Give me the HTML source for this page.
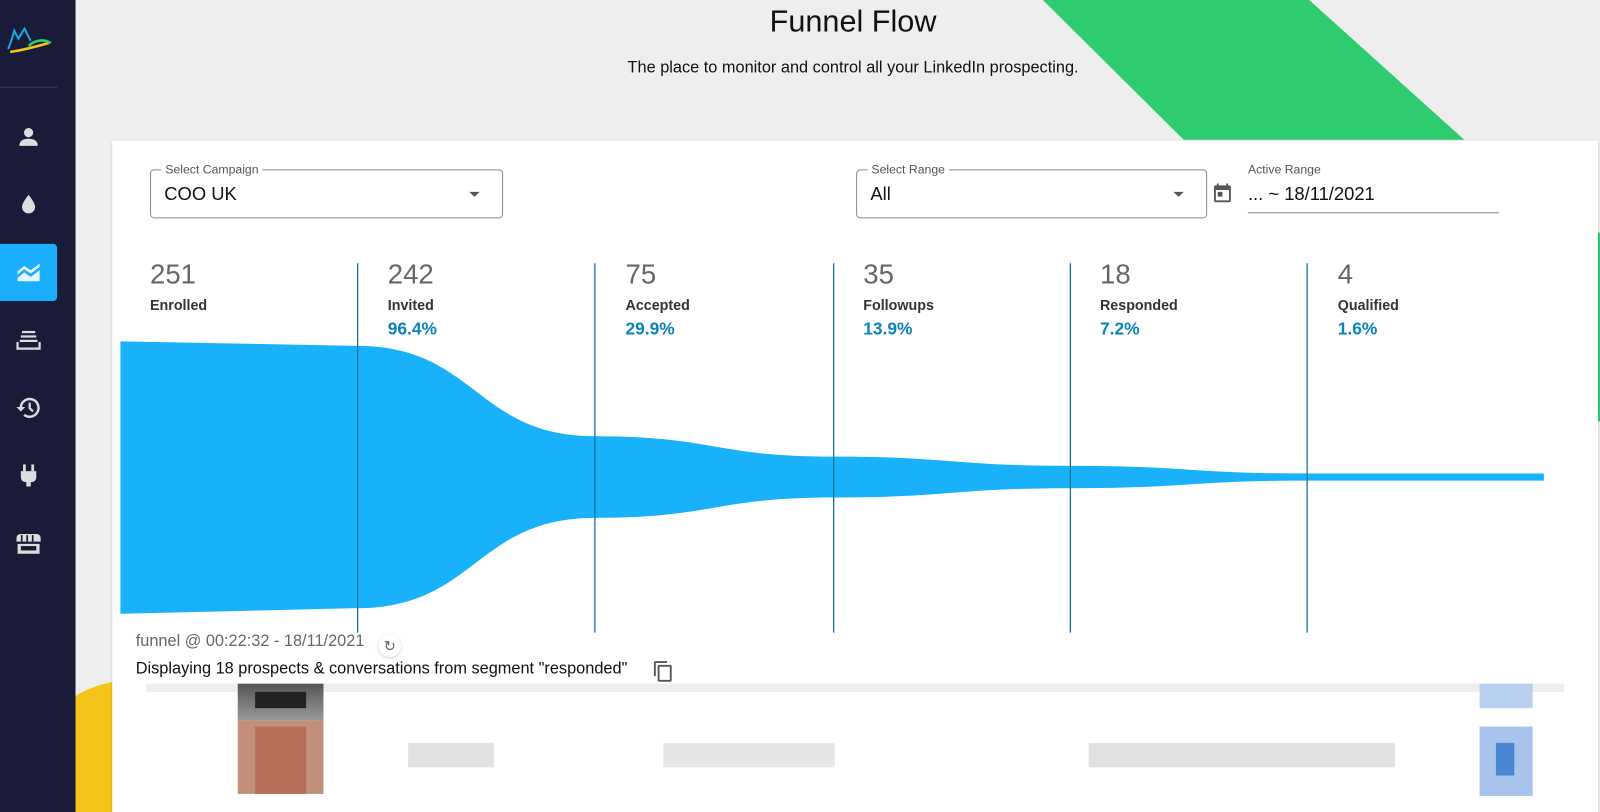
<!DOCTYPE html>
<html><head><meta charset="utf-8"><style>
*{margin:0;padding:0;box-sizing:border-box}
html,body{width:1600px;height:812px;overflow:hidden;background:#eeeeee}
body{font-family:"Liberation Sans",Arial,sans-serif;position:relative}
#w{position:absolute;left:0;top:0;width:1568px;height:796px;transform:scale(1.0204);transform-origin:0 0}
.side{position:absolute;left:0;top:0;width:74px;height:800px;background:#1a1b38}
.side .ic{position:absolute;left:0;width:56px;height:56px;display:flex;align-items:center;justify-content:center}
.card{position:absolute;left:110px;top:138px;width:1456px;height:680px;background:#fff;box-shadow:0 1px 3px rgba(0,0,0,.15)}
.abs{position:absolute}
.fld{position:absolute;border:1px solid #8a8a8a;border-radius:4px;height:48px}
.fld .lb{position:absolute;top:-8px;left:10px;background:#fff;padding:0 4px;font-size:12px;color:#555}
.fld .v{position:absolute;left:13px;top:13px;font-size:18px;color:#111}
.fld .ar{position:absolute;right:22px;top:21px;border-left:5px solid transparent;border-right:5px solid transparent;border-top:5px solid #555}
.num{font-size:27px;color:#666}
.nm{font-size:14px;font-weight:bold;color:#333;margin-top:6px}
.pc{font-size:17px;font-weight:bold;color:#0a83b8;margin-top:6px}
</style></head><body><div id="w">
<svg class="abs" style="left:0;top:0" width="1600" height="812">
<polygon points="1022,0 1283,0 1435,137 1160,137" fill="#2ecc6f"/>
<path d="M74,682 Q90,672 112,668 L112,812 L74,812Z" fill="#f4c518"/>
<rect x="1565" y="228" width="3" height="185" fill="#2ecc6f"/>
</svg>
<div class="side">
<svg class="abs" style="left:4px;top:24px" width="48" height="30" viewBox="0 0 48 30">
<path d="M4,24 Q8,14 10,6 L14,14 L20,4 L26,16" fill="none" stroke="#1aa7e6" stroke-width="2"/>
<path d="M6,27 Q24,24 44,18" fill="none" stroke="#f4c518" stroke-width="2.5"/>
<path d="M24,21 Q34,12 46,18" fill="none" stroke="#2ecc6f" stroke-width="2.5"/>
</svg>
<div class="abs" style="left:0;top:85px;width:56px;height:1px;background:#3a3b58"></div>
<div class="ic" style="top:106px"><svg width="24" height="24" viewBox="0 0 24 24"><circle cx="12" cy="8" r="4.5" fill="#ddd"/><path d="M3,21 Q3,14 12,14 Q21,14 21,21Z" fill="#ddd"/></svg></div>
<div class="ic" style="top:172px"><svg width="22" height="24" viewBox="0 0 24 24"><path d="M12,2 Q19,11 19,15 A7,7 0 0 1 5,15 Q5,11 12,2Z" fill="#ddd"/></svg></div>
<div class="ic" style="top:239px;background:#1aaefc;border-radius:0 4px 4px 0"><svg width="26" height="22" viewBox="0 0 24 20"><path d="M2,9 L8,4 L14,8 L22,2 L22,5 L14,11 L8,7 L2,12Z" fill="#e8f6ff"/><path d="M2,15 L8,10 L14,14 L22,8 L22,18 L2,18Z" fill="#e8f6ff"/></svg></div>
<div class="ic" style="top:305px"><svg width="26" height="24" viewBox="0 0 24 22"><rect x="6" y="3" width="12" height="2" fill="#ddd"/><rect x="5" y="7" width="14" height="2" fill="#ddd"/><rect x="4" y="11" width="16" height="2" fill="#ddd"/><path d="M2,13 V19 H22 V13" fill="none" stroke="#ddd" stroke-width="2"/></svg></div>
<div class="ic" style="top:372px"><svg width="26" height="26" viewBox="0 0 24 24"><path d="M5,12 A8,8 0 1 1 8,18" fill="none" stroke="#ddd" stroke-width="2.2"/><path d="M1,11 L5,15 L9,11Z" fill="#ddd"/><path d="M13,7 V12 L16,15" fill="none" stroke="#ddd" stroke-width="2"/></svg></div>
<div class="ic" style="top:438px"><svg width="22" height="26" viewBox="0 0 20 24"><rect x="5" y="2" width="2.5" height="6" fill="#ddd"/><rect x="12.5" y="2" width="2.5" height="6" fill="#ddd"/><path d="M3,8 H17 V13 Q17,18 12,18 V22 H8 V18 Q3,18 3,13Z" fill="#ddd"/></svg></div>
<div class="ic" style="top:505px"><svg width="28" height="24" viewBox="0 0 26 22"><path d="M2,6 Q2,2 6,2 H20 Q24,2 24,6 V9 H2Z" fill="#ddd"/><rect x="3" y="11" width="20" height="9" fill="#ddd"/><rect x="6" y="3" width="1.5" height="6" fill="#1a1b38"/><rect x="11" y="3" width="1.5" height="6" fill="#1a1b38"/><rect x="16" y="3" width="1.5" height="6" fill="#1a1b38"/><rect x="6" y="13" width="14" height="4" fill="#1a1b38"/></svg></div>
</div>
<div class="abs" style="left:0;top:5px;width:1672px;text-align:center;font-size:30px;color:#111">Funnel Flow</div>
<div class="abs" style="left:0;top:58px;width:1672px;text-align:center;font-size:16px;color:#111">The place to monitor and control all your LinkedIn prospecting.</div>
<div class="card"></div>
<div class="fld" style="left:147px;top:166px;width:346px"><span class="lb">Select Campaign</span><span class="v">COO UK</span><span class="ar"></span></div>
<div class="fld" style="left:839px;top:166px;width:344px"><span class="lb">Select Range</span><span class="v">All</span><span class="ar"></span></div>
<svg class="abs" style="left:1187px;top:178px" width="22" height="22" viewBox="0 0 24 24"><path d="M19,4H18V2H16V4H8V2H6V4H5A2,2 0 0 0 3,6V20A2,2 0 0 0 5,22H19A2,2 0 0 0 21,20V6A2,2 0 0 0 19,4M19,20H5V9H19V20M7,11H12V16H7Z" fill="#555"/></svg>
<div class="abs" style="left:1223px;top:159px;font-size:12px;color:#555">Active Range</div>
<div class="abs" style="left:1223px;top:180px;font-size:18px;color:#111">... ~ 18/11/2021</div>
<div class="abs" style="left:1223px;top:208px;width:246px;height:1px;background:#888"></div>
<svg class="abs" style="left:0;top:0" width="1600" height="812">
<path d="M118,334.5 L350,339 C466,339 466,427.5 583,427.5 C700,427.5 700,447.5 817,447.5 C933,447.5 933,456.5 1049,456.5 C1165,456.5 1165,464 1281,464 L1513,464 L1513,471 L1281,471 C1165,471 1165,478.5 1049,478.5 C933,478.5 933,487.5 817,487.5 C700,487.5 700,507.5 583,507.5 C466,507.5 466,596 350,596 L118,601.5Z" fill="#1ab1fb"/>
<g stroke="#0a6e96" stroke-width="1.2"><line x1="350.5" y1="258" x2="350.5" y2="620"/><line x1="583" y1="258" x2="583" y2="620"/><line x1="817" y1="258" x2="817" y2="620"/><line x1="1049" y1="258" x2="1049" y2="620"/><line x1="1281" y1="258" x2="1281" y2="620"/></g>
</svg>
<div class="abs" style="left:147px;top:254px"><div class="num">251</div><div class="nm">Enrolled</div></div>
<div class="abs" style="left:380px;top:254px"><div class="num">242</div><div class="nm">Invited</div><div class="pc">96.4%</div></div>
<div class="abs" style="left:613px;top:254px"><div class="num">75</div><div class="nm">Accepted</div><div class="pc">29.9%</div></div>
<div class="abs" style="left:846px;top:254px"><div class="num">35</div><div class="nm">Followups</div><div class="pc">13.9%</div></div>
<div class="abs" style="left:1078px;top:254px"><div class="num">18</div><div class="nm">Responded</div><div class="pc">7.2%</div></div>
<div class="abs" style="left:1311px;top:254px"><div class="num">4</div><div class="nm">Qualified</div><div class="pc">1.6%</div></div>
<div class="abs" style="left:133px;top:620px;font-size:16px;color:#666">funnel @ 00:22:32 - 18/11/2021</div>
<div class="abs" style="left:371px;top:622px;width:22px;height:22px;border-radius:50%;box-shadow:0 1px 3px rgba(0,0,0,.2);text-align:center;font-size:14px;line-height:22px;color:#666">↻</div>
<div class="abs" style="left:133px;top:647px;font-size:16px;color:#111">Displaying 18 prospects &amp; conversations from segment "responded"</div>
<svg class="abs" style="left:639px;top:647px" width="22" height="22" viewBox="0 0 24 24"><path d="M16,1H4A2,2 0 0 0 2,3V17H4V3H16V1M19,5H8A2,2 0 0 0 6,7V21A2,2 0 0 0 8,23H19A2,2 0 0 0 21,21V7A2,2 0 0 0 19,5M19,21H8V7H19V21Z" fill="#555"/></svg>
<div class="abs" style="left:143px;top:670px;width:1390px;height:8px;background:#eee"></div>
<div class="abs" style="left:233px;top:670px;width:84px;height:36px;background:linear-gradient(#555,#999)"></div>
<div class="abs" style="left:250px;top:678px;width:50px;height:16px;background:#222"></div>
<div class="abs" style="left:233px;top:706px;width:84px;height:72px;background:#c2907a"></div>
<div class="abs" style="left:250px;top:712px;width:50px;height:66px;background:#b76e58"></div>
<div class="abs" style="left:400px;top:728px;width:84px;height:24px;background:#e2e2e2"></div>
<div class="abs" style="left:650px;top:728px;width:168px;height:24px;background:#e6e6e6"></div>
<div class="abs" style="left:1067px;top:728px;width:300px;height:24px;background:#e2e2e2"></div>
<div class="abs" style="left:1450px;top:670px;width:52px;height:24px;background:#b8cff0"></div>
<div class="abs" style="left:1450px;top:712px;width:52px;height:68px;background:#a9c4ec"></div>
<div class="abs" style="left:1466px;top:728px;width:18px;height:32px;background:#4a86d4"></div>
</div></body></html>
